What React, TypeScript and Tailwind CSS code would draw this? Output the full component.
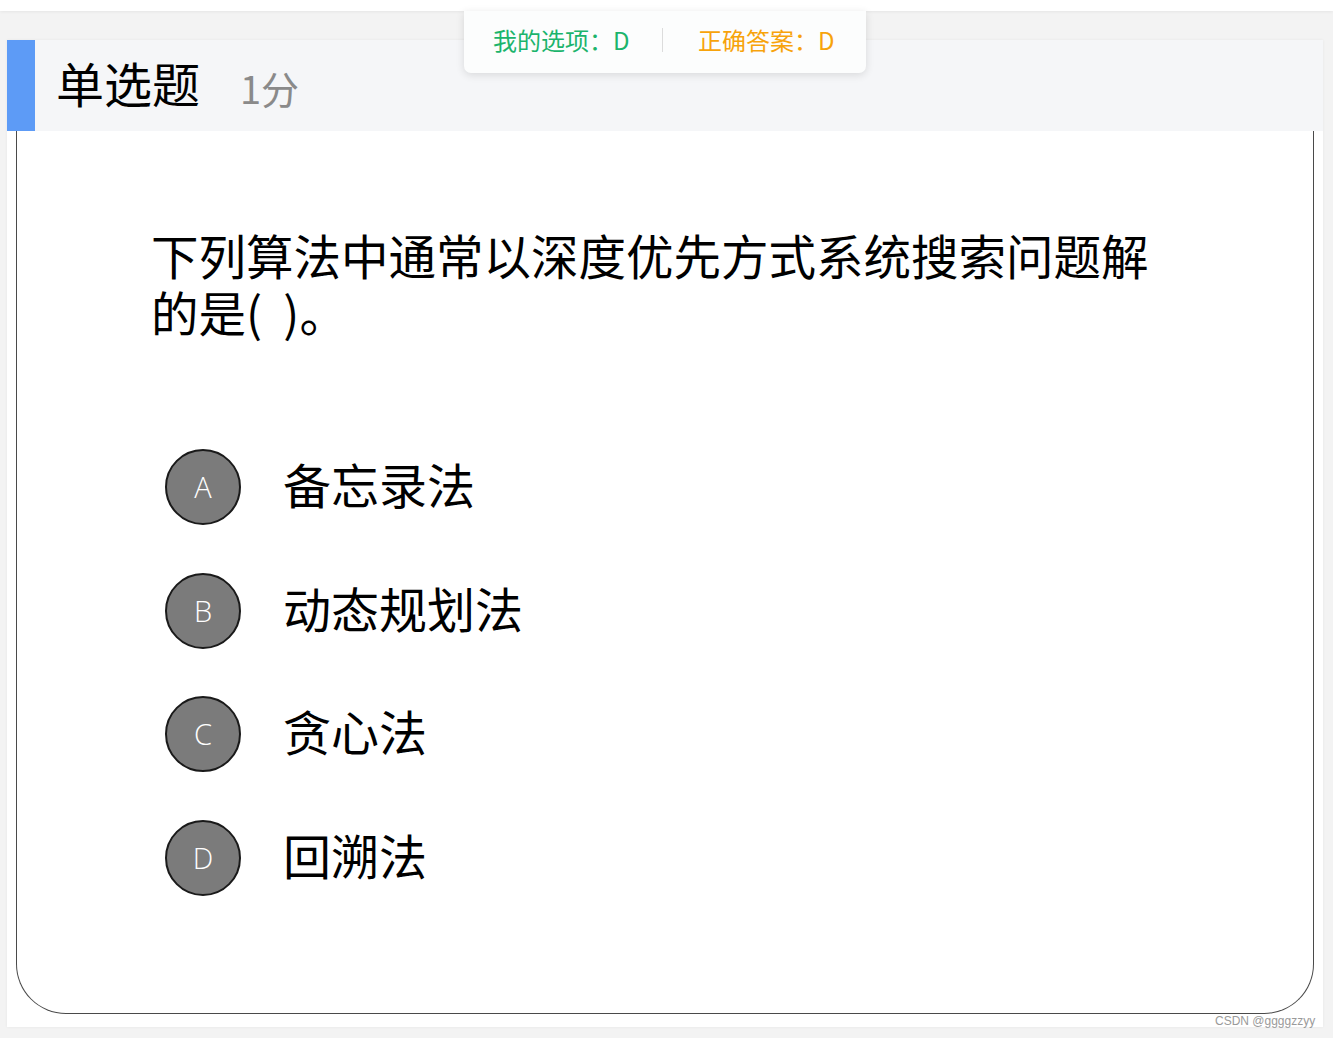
import React from 'react';

const options = [
  { key: 'A', text: '备忘录法' },
  { key: 'B', text: '动态规划法' },
  { key: 'C', text: '贪心法' },
  { key: 'D', text: '回溯法' },
];

export default function App() {
  return (
    <div className="relative w-[1333px] h-[1038px] bg-[#f3f3f3] overflow-hidden font-['Noto_Sans_CJK_SC',sans-serif]">
      {/* top strip */}
      <div className="h-[11px] bg-white shadow-[0_1px_3px_rgba(0,0,0,0.06)]" />

      {/* answer popup */}
      <div className="absolute left-[464px] top-[11px] w-[402px] h-[62px] bg-[#fcfdfd] rounded-b-[7px] shadow-[0_2px_8px_rgba(0,0,0,0.12)] flex items-center pb-[5px] text-[24px] leading-none z-10">
        <div className="w-[198px] pl-[29px] text-[#1bb46c]">我的选项：D</div>
        <div className="w-px h-[24px] bg-[#dcdcdc]" />
        <div className="pl-[35px] text-[#f7a30b]">正确答案：D</div>
      </div>

      {/* card */}
      <div className="ml-[7px] mt-[29px] w-[1316px] h-[987px] bg-white shadow-[0_0_3px_rgba(0,0,0,0.06)]">
        {/* header */}
        <div className="h-[91px] flex items-center bg-[#f5f6f8]">
          <div className="w-[28px] h-full bg-[#5d9bf6]" />
          <div className="ml-[21px] mb-[8px] text-[48px] leading-none text-black">单选题</div>
          <div className="ml-[40px] mt-[4px] text-[38px] leading-none text-[#8a8a8a]">1分</div>
        </div>

        {/* body */}
        <div className="px-[9px]">
          <div className="h-[883px] border-x-[1.5px] border-b-[1.5px] border-[#4a4a4a] rounded-b-[50px] pl-[134px] pt-[95px]">
            <div className="w-[1010px] text-[47.5px] leading-[57px] text-black">
              下列算法中通常以深度优先方式系统搜索问题解的是(&nbsp;&nbsp;)。
            </div>

            <div className="mt-[109px] ml-[14px] flex flex-col gap-[47.5px]">
              {options.map((o) => (
                <div key={o.key} className="flex items-center h-[76px]">
                  <div className="w-[76px] h-[76px] rounded-full bg-[#7b7b7b] border-2 border-[#1a1a1a] flex items-center justify-center text-white text-[29px] font-light font-['Open_Sans',sans-serif]">
                    {o.key}
                  </div>
                  <div className="ml-[42px] mb-[8px] text-[48px] leading-none text-black">{o.text}</div>
                </div>
              ))}
            </div>
          </div>
        </div>
      </div>

      {/* watermark */}
      <div className="absolute left-[1215px] top-[1012px] text-[12px] text-[#9a9a9a] font-['Liberation_Sans',sans-serif]">
        CSDN @ggggzzyy
      </div>
    </div>
  );
}
